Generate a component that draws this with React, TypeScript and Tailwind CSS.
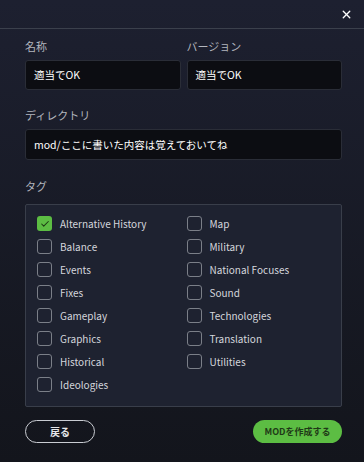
import { Check, X } from "lucide-react";

const leftTags = ["Alternative History", "Balance", "Events", "Fixes", "Gameplay", "Graphics", "Historical", "Ideologies"];
const rightTags = ["Map", "Military", "National Focuses", "Sound", "Technologies", "Translation", "Utilities"];

function Tag({ label, checked }: { label: string; checked?: boolean }) {
  return (
    <div className="flex items-center h-[23px]">
      {checked ? (
        <div className="w-[15px] h-[15px] rounded-[3px] bg-[#5cbd43] flex items-center justify-center">
          <Check size={10} strokeWidth={2.5} className="text-[#1d3a14]" />
        </div>
      ) : (
        <div className="w-[15px] h-[15px] rounded-[3px] border border-[#7b7f88]" />
      )}
      <span className="ml-[8px] text-[10px] text-[#d4d6dc]">{label}</span>
    </div>
  );
}

export default function App() {
  return (
    <div
      className="w-[364px] h-[462px] overflow-hidden bg-gradient-to-b from-[#1d2030] to-[#13151c] text-white flex flex-col"
      style={{ fontFamily: '"Noto Sans CJK JP", "Noto Sans", sans-serif' }}
    >
      <div className="h-[29px] border-b border-[#3b404c] flex items-center justify-end pr-[11px] shrink-0">
        <X size={13} strokeWidth={2.5} className="text-white mt-[1px]" />
      </div>

      <div className="pl-[25px] pr-[22px] pt-[7px] flex flex-col">
        <div className="grid grid-cols-2 gap-x-[6px]">
          <div className="flex flex-col">
            <span className="text-[11px] text-[#b3b6be] leading-[20px]">名称</span>
            <div className="mt-[4px] h-[30px] rounded-[3px] bg-[#0c0d12] border border-[#2a2d37] flex items-center px-[8px] text-[10.5px] text-white">
              適当でOK
            </div>
          </div>
          <div className="flex flex-col">
            <span className="text-[11px] text-[#b3b6be] leading-[20px]">バージョン</span>
            <div className="mt-[4px] h-[30px] rounded-[3px] bg-[#0c0d12] border border-[#2a2d37] flex items-center px-[8px] text-[10.5px] text-white">
              適当でOK
            </div>
          </div>
        </div>

        <span className="mt-[15px] text-[11px] text-[#b3b6be] leading-[20px]">ディレクトリ</span>
        <div className="mt-[4px] h-[31px] rounded-[3px] bg-[#0c0d12] border border-[#2a2d37] flex items-center px-[8px] text-[10.5px] text-white">
          mod/ここに書いた内容は覚えておいてね
        </div>

        <span className="mt-[16px] text-[11px] text-[#b3b6be] leading-[20px]">タグ</span>
        <div className="mt-[8px] h-[203px] bg-[#1e2230] border border-[#393e4a] rounded-[2px] grid grid-cols-2 px-[11px] pt-[7px]">
          <div className="flex flex-col">
            {leftTags.map((t, i) => (
              <Tag key={t} label={t} checked={i === 0} />
            ))}
          </div>
          <div className="flex flex-col pl-[3px]">
            {rightTags.map((t) => (
              <Tag key={t} label={t} />
            ))}
          </div>
        </div>

        <div className="mt-[13px] flex justify-between items-center">
          <button className="w-[70px] h-[23px] rounded-full border border-[#c9ccd2] text-[10px] font-bold text-[#e6e7ea]">
            戻る
          </button>
          <button className="w-[89px] h-[23px] rounded-full bg-[#5cbd43] text-[9px] font-bold text-[#1f3a17]">
            MODを作成する
          </button>
        </div>
      </div>
    </div>
  );
}
